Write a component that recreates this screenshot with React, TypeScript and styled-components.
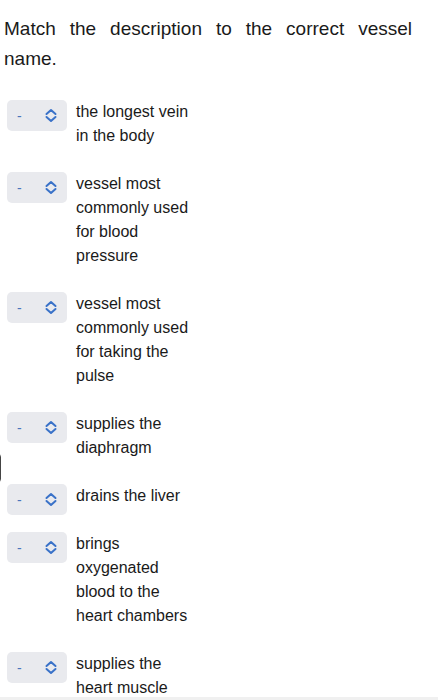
import styled, { createGlobalStyle } from 'styled-components';

const GlobalStyle = createGlobalStyle`
  html, body {
    margin: 0;
    padding: 0;
    background: #fff;
    overflow: hidden;
  }
  body {
    font-family: "Liberation Sans", Arial, sans-serif;
    color: #1b1b1b;
  }
`;

const items = [
  'the longest vein in the body',
  'vessel most commonly used for blood pressure',
  'vessel most commonly used for taking the pulse',
  'supplies the diaphragm',
  'drains the liver',
  'brings oxygenated blood to the heart chambers',
  'supplies the heart muscle',
];

const ChevronIcon = () => (
  <svg width="12" height="15" viewBox="0 0 12 15" fill="none">
    <path
      d="M1.5 6 L6 2 L10.5 6"
      stroke="#3a72c8"
      strokeWidth="2"
      strokeLinecap="round"
      strokeLinejoin="round"
    />
    <path
      d="M1.5 9 L6 13 L10.5 9"
      stroke="#3a72c8"
      strokeWidth="2"
      strokeLinecap="round"
      strokeLinejoin="round"
    />
  </svg>
);

const App = () => {
  return (
    <Page>
      <GlobalStyle />
      <Title>Match the description to the correct vessel name.</Title>
      <List>
        {items.map((text) => (
          <Row key={text}>
            <Select>
              <Dash>-</Dash>
              <ChevronIcon />
            </Select>
            <Description>{text}</Description>
          </Row>
        ))}
      </List>
      <FocusEdge />
      <BottomStrip />
    </Page>
  );
};

const Page = styled.div`
  position: relative;
  height: 700px;
  padding: 14px 0 0 4px;
  box-sizing: border-box;
`;

const Title = styled.p`
  margin: 0;
  width: 408px;
  font-size: 19px;
  line-height: 30px;
  text-align: justify;
  color: #1a1a1a;
`;

const List = styled.div`
  display: flex;
  flex-direction: column;
  gap: 24px;
  margin-top: 26px;
  padding-left: 3px;
`;

const Row = styled.div`
  display: flex;
  align-items: flex-start;
  gap: 9px;
`;

const Select = styled.div`
  display: flex;
  align-items: center;
  justify-content: space-between;
  flex-shrink: 0;
  width: 60px;
  height: 31px;
  margin-bottom: -7px;
  padding: 0 10px 0 10px;
  box-sizing: border-box;
  background: #e9eaee;
  border-radius: 5px;
`;

const Dash = styled.span`
  font-size: 14px;
  color: #4a76bd;
  line-height: 1;
`;

const Description = styled.div`
  width: 118px;
  font-size: 16px;
  line-height: 24px;
  color: #1a1a1a;
`;

const FocusEdge = styled.div`
  position: absolute;
  left: -8px;
  top: 453px;
  width: 9px;
  height: 30px;
  border: 1px solid #444;
  border-radius: 4px;
  box-sizing: border-box;
`;

const BottomStrip = styled.div`
  position: absolute;
  left: 0;
  right: 0;
  bottom: 0;
  height: 3px;
  background: #f0f0f0;
`;

export default App;
